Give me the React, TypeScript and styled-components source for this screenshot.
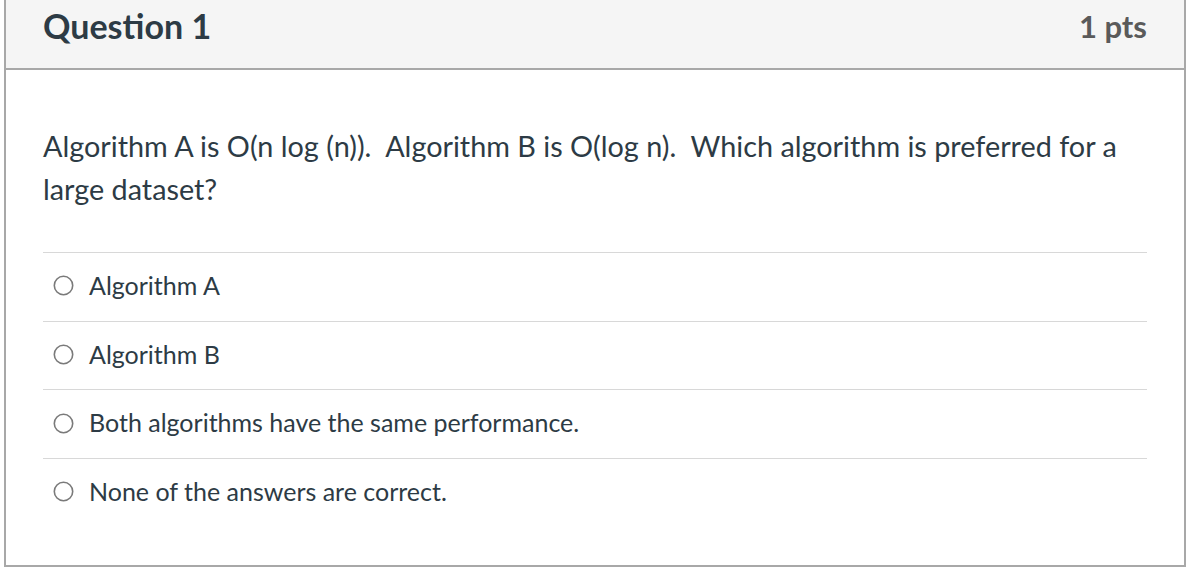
import styled, { createGlobalStyle } from "styled-components"

const GlobalStyle = createGlobalStyle`
	body {
		margin: 0;
		background: #ffffff;
		font-family: Lato, "Open Sans", sans-serif;
	}
`

const answers = [
	"Algorithm A",
	"Algorithm B",
	"Both algorithms have the same performance.",
	"None of the answers are correct.",
]

const Radio = () => (
	<RadioIcon width="21" height="21" viewBox="0 0 21 21">
		<circle cx="10.5" cy="10.5" r="9.2" fill="#ffffff" stroke="#7a7a7a" strokeWidth="1.6" />
	</RadioIcon>
)

export default function App() {
	return (
		<>
			<GlobalStyle />
			<Card>
				<Header>
					<Title>Question 1</Title>
					<Points>1 pts</Points>
				</Header>
				<Body>
					<QuestionText>
						Algorithm A is O(n log (n)).&nbsp; Algorithm B is O(log n).&nbsp; Which algorithm is preferred for a
						large dataset?
					</QuestionText>
					<Answers>
						{answers.map((answer) => (
							<Answer key={answer}>
								<Radio />
								<AnswerLabel>{answer}</AnswerLabel>
							</Answer>
						))}
					</Answers>
				</Body>
			</Card>
		</>
	)
}

const Card = styled.div`
	width: 1182px;
	margin-left: 4px;
	box-sizing: border-box;
	border: 2px solid #a8a8a8;
	border-top: none;
	background: #ffffff;
`

const Header = styled.div`
	display: flex;
	flex-direction: row;
	justify-content: space-between;
	align-items: flex-start;
	box-sizing: border-box;
	height: 70px;
	padding: 6px 37px 0;
	background: #f5f5f5;
	border-bottom: 2px solid #a8a8a8;
`

const Title = styled.div`
	color: #2d3b45;
	font-size: 34px;
	line-height: 40px;
	font-weight: 700;
`

const Points = styled.div`
	color: #5a5a5a;
	font-size: 31px;
	line-height: 40px;
	font-weight: 700;
`

const Body = styled.div`
	padding: 55px 37px 38px;
`

const QuestionText = styled.div`
	color: #2d3b45;
	font-size: 28.8px;
	line-height: 43px;
`

const Answers = styled.div`
	display: flex;
	flex-direction: column;
	margin-top: 41px;
`

const Answer = styled.div`
	display: flex;
	flex-direction: row;
	align-items: center;
	box-sizing: border-box;
	height: 68.7px;
	padding: 0 0 4px 10px;
	border-top: 1px solid #d8d8d8;
`

const RadioIcon = styled.svg`
	flex-shrink: 0;
	margin-right: 15px;
	margin-top: 2px;
`

const AnswerLabel = styled.div`
	color: #2d3b45;
	font-size: 25px;
`
